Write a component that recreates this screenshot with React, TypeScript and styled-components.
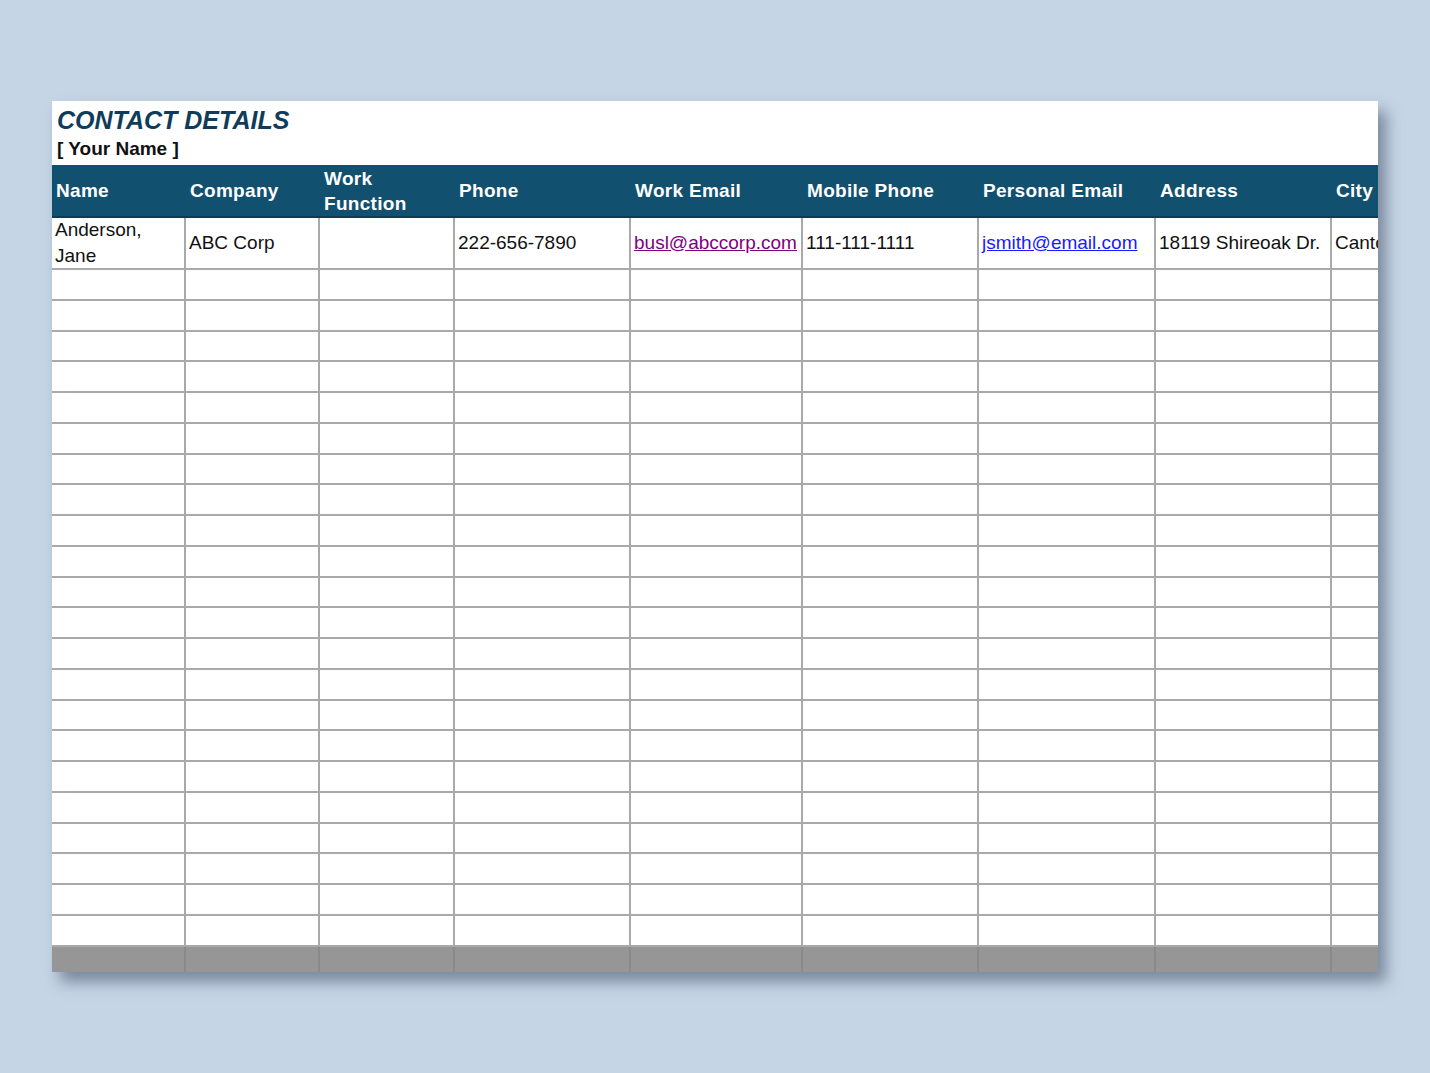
import * as React from 'react'
import styled, { createGlobalStyle } from 'styled-components'

const Global = createGlobalStyle`
  html, body { margin: 0; padding: 0; background: #c5d5e6; }
  body { font-family: "Liberation Sans", Arial, sans-serif; }
`

const COLS = '134px 134px 135px 176px 172px 176px 177px 176px 46px'

const Page = styled.div`
  width: 1430px;
  height: 1073px;
  padding: 101px 0 0 52px;
  box-sizing: border-box;
`
const Sheet = styled.div`
  width: 1326px;
  background: #fff;
  box-shadow: 8px 10px 14px rgba(60, 75, 95, 0.55);
  overflow: hidden;
`
const TitleBlock = styled.div`
  height: 64px;
  padding: 4px 0 0 5px;
  box-sizing: border-box;
`
const Title = styled.div`
  font-size: 25px;
  font-weight: bold;
  font-style: italic;
  color: #0f3c5a;
  line-height: 30px;
`
const Subtitle = styled.div`
  font-size: 19px;
  font-weight: bold;
  color: #111;
  line-height: 28px;
`
const Row = styled.div<{ $h: number; $bg?: string }>`
  display: grid;
  grid-template-columns: ${COLS};
  height: ${p => p.$h}px;
  background: ${p => p.$bg || '#fff'};
`
const HeadCell = styled.div`
  background: #12506f;
  color: #fff;
  font-weight: bold;
  font-size: 19px;
  letter-spacing: 0.3px;
  line-height: 25px;
  display: flex;
  align-items: center;
  padding: 0 4px;
  white-space: nowrap;
  overflow: hidden;
  border-bottom: 2px solid #0d3c55;
`
const Cell = styled.div<{ $last?: boolean }>`
  border-right: ${p => (p.$last ? 'none' : '2px solid #a9a9a9')};
  border-bottom: 2px solid #a9a9a9;
  font-size: 19px;
  line-height: 26px;
  color: #111;
  display: flex;
  align-items: center;
  padding: 0 3px;
  white-space: nowrap;
  overflow: hidden;
  box-sizing: border-box;
`
const Link = styled.span<{ $c: string }>`
  color: ${p => p.$c};
  text-decoration: underline;
`
const FootCell = styled.div<{ $last?: boolean }>`
  border-right: ${p => (p.$last ? 'none' : '2px solid #8a8a8a')};
  background: #969696;
`

const heads = ['Name', 'Company', 'Work\nFunction', 'Phone', 'Work Email', 'Mobile Phone', 'Personal Email', 'Address', 'City']

export default function App() {
  const empty = Array.from({ length: 22 })
  return (
    <Page>
      <Global />
      <Sheet>
        <TitleBlock>
          <Title>CONTACT DETAILS</Title>
          <Subtitle>[ Your Name ]</Subtitle>
        </TitleBlock>
        <Row $h={53}>
          {heads.map(h => (
            <HeadCell key={h}>
              <span style={{ whiteSpace: 'pre' }}>{h}</span>
            </HeadCell>
          ))}
        </Row>
        <Row $h={52}>
          <Cell style={{ whiteSpace: 'pre' }}>{'Anderson,\nJane'}</Cell>
          <Cell>ABC Corp</Cell>
          <Cell />
          <Cell>222-656-7890</Cell>
          <Cell><Link $c="#800080">busl@abccorp.com</Link></Cell>
          <Cell>111-111-1111</Cell>
          <Cell><Link $c="#1a1aff">jsmith@email.com</Link></Cell>
          <Cell>18119 Shireoak Dr.</Cell>
          <Cell $last>Canton</Cell>
        </Row>
        {empty.map((_, i) => (
          <Row key={i} $h={30.75}>
            {heads.map((h, j) => (
              <Cell key={h} $last={j === 8} />
            ))}
          </Row>
        ))}
        <Row $h={25}>
          {heads.map((h, j) => (
            <FootCell key={h} $last={j === 8} />
          ))}
        </Row>
      </Sheet>
    </Page>
  )
}
